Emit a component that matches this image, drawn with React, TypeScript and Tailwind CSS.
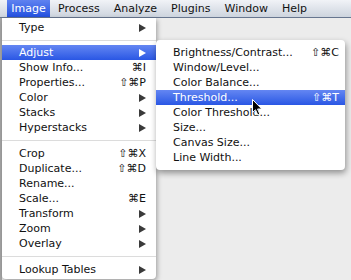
import React from "react";

type Item =
  | { kind: "sep"; h: string }
  | { kind: "item"; label: string; key?: string; sub?: boolean; active?: boolean };

const MAIN: Item[] = [
  { kind: "item", label: "Type", sub: true },
  { kind: "sep", h: "h-[10px]" },
  { kind: "item", label: "Adjust", sub: true, active: true },
  { kind: "item", label: "Show Info...", key: "⌘I" },
  { kind: "item", label: "Properties...", key: "⇧⌘P" },
  { kind: "item", label: "Color", sub: true },
  { kind: "item", label: "Stacks", sub: true },
  { kind: "item", label: "Hyperstacks", sub: true },
  { kind: "sep", h: "h-[11px]" },
  { kind: "item", label: "Crop", key: "⇧⌘X" },
  { kind: "item", label: "Duplicate...", key: "⇧⌘D" },
  { kind: "item", label: "Rename..." },
  { kind: "item", label: "Scale...", key: "⌘E" },
  { kind: "item", label: "Transform", sub: true },
  { kind: "item", label: "Zoom", sub: true },
  { kind: "item", label: "Overlay", sub: true },
  { kind: "sep", h: "h-[11px]" },
  { kind: "item", label: "Lookup Tables", sub: true },
];

const ADJUST: Item[] = [
  { kind: "item", label: "Brightness/Contrast...", key: "⇧⌘C" },
  { kind: "item", label: "Window/Level..." },
  { kind: "item", label: "Color Balance..." },
  { kind: "item", label: "Threshold...", key: "⇧⌘T", active: true },
  { kind: "item", label: "Color Threshold..." },
  { kind: "item", label: "Size..." },
  { kind: "item", label: "Canvas Size..." },
  { kind: "item", label: "Line Width..." },
];

const BAR = ["Image", "Process", "Analyze", "Plugins", "Window", "Help"];

function Arrow({ white }: { white?: boolean }) {
  return (
    <svg width="7" height="8" viewBox="0 0 7 8" className="shrink-0">
      <polygon points="0,0 7,4 0,8" fill={white ? "#ffffff" : "#3a3a3a"} />
    </svg>
  );
}

function Row({ it, pr }: { it: Item; pr: string }) {
  if (it.kind === "sep") {
    return (
      <div className={`${it.h} flex items-center`}>
        <div className="w-full h-px bg-[#dcdcdc]" />
      </div>
    );
  }
  return (
    <div
      className={`h-[15px] flex items-center justify-between pl-[17px] ${pr} leading-none ${
        it.active ? "bg-linear-to-b from-[#6486f2] to-[#2a56e4] text-white" : ""
      }`}
    >
      <span className="whitespace-nowrap">{it.label}</span>
      {it.key && <span className="whitespace-nowrap">{it.key}</span>}
      {it.sub && <Arrow white={it.active} />}
    </div>
  );
}

export default function App() {
  return (
    <div className="relative w-[351px] h-[280px] overflow-hidden bg-[#ececec] font-['DejaVu_Sans',sans-serif] text-[11px] text-[#111]">
      {/* Menu bar */}
      <div className="h-[18px] flex items-stretch pl-[7px] bg-linear-to-b from-[#f1f3f7] to-[#cdd4de] border-b border-[#67768f]">
        {BAR.map((b, i) => (
          <div
            key={b}
            className={`flex items-center leading-none ${
              i === 0
                ? "w-[43px] mr-[1px] justify-center bg-linear-to-b from-[#5f82f0] to-[#2450e0] text-white"
                : "px-[7px]"
            }`}
          >
            {b}
          </div>
        ))}
      </div>

      <div className="flex items-start">
        <div className="w-[2px] h-[262px] bg-[#a8a8a8]" />

        {/* Image menu */}
        <div className="w-[154px] bg-white pt-[2px] pb-[2px] rounded-b-[4px] shadow-[1px_2px_5px_rgba(0,0,0,0.35)]">
          {MAIN.map((it, i) => (
            <Row key={i} it={it} pr="pr-[10px]" />
          ))}
        </div>

        {/* Adjust submenu */}
        <div className="w-[189px] mt-[22px] bg-white pt-[5px] pb-[5px] rounded-[4px] shadow-[1px_3px_6px_rgba(0,0,0,0.4)]">
          {ADJUST.map((it, i) => (
            <Row key={i} it={it} pr="pr-[6px]" />
          ))}
        </div>
      </div>

      {/* Mouse pointer */}
      <svg className="absolute left-[252px] top-[99px]" width="11" height="17" viewBox="0 0 11 17">
        <path d="M0.5 0.5 L0.5 13.5 L3.5 10.8 L5.8 16 L7.8 15.1 L5.6 10 L9.8 10 Z" fill="#000" stroke="#fff" strokeWidth="1" />
      </svg>
    </div>
  );
}
